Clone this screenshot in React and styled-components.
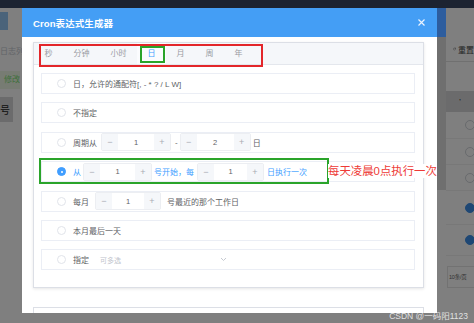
import React from 'react';
import styled, { createGlobalStyle, css } from 'styled-components';
import { RotateCw } from 'lucide-react';

const GlobalStyle = createGlobalStyle`
  html, body {
    margin: 0;
    padding: 0;
  }
  body {
    width: 474px;
    height: 323px;
    overflow: hidden;
    font-family: "Liberation Sans", "Noto Sans CJK SC", sans-serif;
  }
`;

const Screen = styled.div`
  position: relative;
  width: 474px;
  height: 323px;
  overflow: hidden;
  background: #ffffff;
  display: flex;
  flex-direction: column;
`;

const TopBar = styled.div`
  height: 8px;
  flex-shrink: 0;
  background: #384662;
`;

const PageBody = styled.div`
  flex: 1;
  display: flex;
  justify-content: space-between;
`;

const LeftPane = styled.div`
  width: 22px;
  display: flex;
  flex-direction: column;
  padding-top: 4px;
  font-size: 8px;
`;

const SideBtn = styled.div`
  width: 8px;
  height: 18px;
  background: #95c7f5;
`;

const SideLabel = styled.div`
  margin-top: 17px;
  color: #c4c8cf;
  line-height: 10px;
  white-space: nowrap;
`;

const GreenBtn = styled.div`
  margin-top: 14px;
  width: 16px;
  height: 18px;
  padding-left: 4px;
  background: #eef9e6;
  color: #7ee07a;
  line-height: 18px;
  overflow: hidden;
`;

const TableHead = styled.div`
  margin-top: ${(p) => p.top || 0}px;
  height: ${(p) => p.h || 22}px;
  width: ${(p) => p.w || '100%'};
  background: #d6d6d8;
  color: #222;
  display: flex;
  align-items: center;
  font-size: ${(p) => p.fs || 8}px;
  white-space: nowrap;
  overflow: hidden;
`;

const RightPane = styled.div`
  width: 28px;
  display: flex;
  flex-direction: column;
  font-size: 8px;
  overflow: hidden;
`;

const ResetBtn = styled.div`
  margin-top: 33px;
  padding-left: 7px;
  height: 16px;
  display: flex;
  align-items: center;
  gap: 2px;
  color: #4a4a4a;
  white-space: nowrap;
`;

const RuleLine = styled.div`
  margin-top: 4px;
  height: 1px;
  background: #e0e0e0;
`;

const SideRow = styled.div`
  height: ${(p) => p.h}px;
  display: flex;
  align-items: center;
  padding-left: 19px;
  border-bottom: 1px solid #f0f0f0;
`;

const SideRadio = styled.span`
  width: 10px;
  height: 10px;
  flex-shrink: 0;
  border-radius: 50%;
  box-sizing: border-box;
  border: 1px solid #d0d4da;
  background: #fff;
  ${({ on }) => on && css`
    border-color: #3d8fe8;
    background: #3d8fe8;
  `}
`;

const PagerBox = styled.div`
  margin-top: 10px;
  margin-left: 1px;
  height: 20px;
  border: 1px solid #e4e4e4;
  border-right: none;
  display: flex;
  align-items: center;
  padding-left: 1px;
  color: #666;
  font-size: 5.5px;
  letter-spacing: -0.2px;
  white-space: nowrap;
`;

const Overlay = styled.div`
  position: absolute;
  inset: 0;
  background: rgba(0, 0, 0, 0.5);
`;

const Dialog = styled.div`
  position: absolute;
  left: 22px;
  top: 8px;
  width: 424px;
  height: 305px;
  display: flex;
  align-items: flex-start;
`;

const DialogMain = styled.div`
  width: 415px;
  height: 100%;
  display: flex;
  flex-direction: column;
  background: #ffffff;
`;

const ScrollTrack = styled.div`
  width: 9px;
  display: flex;
  flex-direction: column;
`;

const ScrollHead = styled.div`
  height: 29px;
  background: #2d5d9e;
`;

const ScrollBody = styled.div`
  height: 153px;
  background: #6f6f6f;
`;

const Header = styled.div`
  height: 29px;
  flex-shrink: 0;
  background: #449ef5;
  display: flex;
  align-items: center;
  justify-content: space-between;
  padding: 0 12px 0 11px;
`;

const Title = styled.div`
  color: #ffffff;
  font-size: 9.5px;
  font-weight: bold;
  letter-spacing: 0.1px;
`;

const CloseBtn = styled.svg`
  width: 7px;
  height: 7px;
`;

const DialogBody = styled.div`
  flex: 1;
  display: flex;
  flex-direction: column;
  gap: 19px;
  padding: 5px 13px 0 11px;
  overflow: hidden;
`;

const TabsCard = styled.div`
  position: relative;
  height: 246px;
  flex-shrink: 0;
  box-sizing: border-box;
  border: 1px solid #dcdfe6;
  box-shadow: 0 1px 3px rgba(0, 0, 0, 0.1);
  display: flex;
  flex-direction: column;
`;

const TabNav = styled.div`
  height: 22px;
  box-sizing: border-box;
  background: #f5f7fa;
  border-bottom: 1px solid #e4e7ed;
  display: flex;
`;

const Tab = styled.div`
  padding: 0 10.5px;
  font-size: 8px;
  line-height: 21px;
  color: #9a9ca3;
  ${({ active }) => active && css`
    color: #409eff;
    background: #fbfcfe;
  `}
`;

const Pane = styled.div`
  display: flex;
  flex-direction: column;
  gap: 8.4px;
  padding: 8px 8px 0 7px;
`;

const Row = styled.div`
  height: 21px;
  box-sizing: border-box;
  border: 1px solid #ebeef5;
  display: flex;
  align-items: center;
  padding-left: 15px;
  font-size: 8px;
  color: ${({ active }) => (active ? '#409eff' : '#606266')};
  white-space: nowrap;
`;

const Radio = styled.span`
  position: relative;
  width: 9px;
  height: 9px;
  flex-shrink: 0;
  box-sizing: border-box;
  border-radius: 50%;
  border: 1px solid #e1e4ea;
  margin-right: 7px;
  ${({ checked }) => checked && css`
    border-color: #409eff;
    background: #409eff;
    &::after {
      content: '';
      position: absolute;
      left: 2.5px;
      top: 2.5px;
      width: 2px;
      height: 2px;
      border-radius: 50%;
      background: #fff;
    }
  `}
`;

const NumBox = styled.div`
  display: flex;
  width: ${({ w }) => w || 69}px;
  height: 18px;
  margin: 0 ${({ mx }) => (mx === undefined ? 3 : mx)}px;
  box-sizing: border-box;
  border: 1px solid #eceef2;
  border-radius: 2px;
  flex-shrink: 0;
`;

const NumBtn = styled.span`
  width: 16px;
  background: #f5f7fa;
  color: #a8abb2;
  display: flex;
  align-items: center;
  justify-content: center;
  font-size: 9px;
`;

const NumVal = styled.span`
  flex: 1;
  display: flex;
  align-items: center;
  justify-content: center;
  color: #606266;
  font-size: 7.5px;
`;

const Select = styled.div`
  width: 135px;
  height: 18px;
  margin-left: 10px;
  box-sizing: border-box;
  display: flex;
  align-items: center;
  justify-content: space-between;
  padding: 0 7px 0 1px;
  color: #c0c4cc;
  font-size: 7px;
`;

const Mark = styled.div`
  position: absolute;
  left: ${(p) => p.x}px;
  top: ${(p) => p.y}px;
  width: ${(p) => p.w}px;
  height: ${(p) => p.h}px;
  box-sizing: border-box;
  border: 2px solid ${(p) => p.color};
  pointer-events: none;
`;

const Note = styled.div`
  position: absolute;
  left: calc(100% + 1px);
  top: 50%;
  transform: translateY(-50%);
  background: #fff;
  color: #ee3a36;
  font-size: 11.4px;
  line-height: 14px;
  white-space: nowrap;
`;

const LowerCard = styled.div`
  flex: 1;
  border: 1px solid #dcdfe6;
  border-bottom: none;
`;

const Watermark = styled.div`
  position: absolute;
  right: 6px;
  bottom: 2px;
  color: rgba(255, 255, 255, 0.78);
  font-size: 8.5px;
  white-space: nowrap;
`;

const tabs = ['秒', '分钟', '小时', '日', '月', '周', '年'];

const InputNumber = ({ value, w, mx }) => (
  <NumBox w={w} mx={mx}>
    <NumBtn>−</NumBtn>
    <NumVal>{value}</NumVal>
    <NumBtn>+</NumBtn>
  </NumBox>
);

const Chevron = () => (
  <svg width="7" height="5" viewBox="0 0 7 5">
    <polyline points="1,1 3.5,3.5 6,1" fill="none" stroke="#c0c4cc" strokeWidth="0.9" />
  </svg>
);

const App = () => {
  return (
    <>
      <GlobalStyle />
      <Screen>
        <TopBar />
        <PageBody>
          <LeftPane>
            <SideBtn />
            <SideLabel>日志列</SideLabel>
            <GreenBtn>修改</GreenBtn>
            <TableHead top={8} h={25} w="13px" fs={10}>号</TableHead>
          </LeftPane>
          <RightPane>
            <ResetBtn>
              <RotateCw size={8} strokeWidth={2.4} />
              重置
            </ResetBtn>
            <RuleLine />
            <TableHead top={29} h={21}>&nbsp;&nbsp;&nbsp;&nbsp;&nbsp;&nbsp;'</TableHead>
            <SideRow h={26}><SideRadio /></SideRow>
            <SideRow h={25}><SideRadio /></SideRow>
            <SideRow h={25}><SideRadio /></SideRow>
            <SideRow h={33}><SideRadio on /></SideRow>
            <SideRow h={30}><SideRadio on /></SideRow>
            <PagerBox>10条/页</PagerBox>
          </RightPane>
        </PageBody>

        <Overlay />

        <Dialog>
          <DialogMain>
            <Header>
              <Title>Cron表达式生成器</Title>
              <CloseBtn viewBox="0 0 7 7">
                <path d="M0.5 0.5 L6.5 6.5 M6.5 0.5 L0.5 6.5" stroke="#eaf3ff" strokeWidth="1.2" />
              </CloseBtn>
            </Header>
            <DialogBody>
              <TabsCard>
                <TabNav>
                  {tabs.map((t) => (
                    <Tab key={t} active={t === '日'}>{t}</Tab>
                  ))}
                </TabNav>
                <Pane>
                  <Row>
                    <Radio />
                    日，允许的通配符[, - * ? / L W]
                  </Row>
                  <Row>
                    <Radio />
                    不指定
                  </Row>
                  <Row>
                    <Radio />
                    周期从
                    <InputNumber value="1" mx={4} w={70} />
                    -
                    <InputNumber value="2" mx={2} w={71} />
                    日
                  </Row>
                  <Row active>
                    <Radio checked />
                    从
                    <InputNumber value="1" mx={2} />
                    号开始，每
                    <InputNumber value="1" mx={3} w={67} />
                    日执行一次
                  </Row>
                  <Row>
                    <Radio />
                    每月
                    <InputNumber value="1" mx={6} w={66} />
                    号最近的那个工作日
                  </Row>
                  <Row>
                    <Radio />
                    本月最后一天
                  </Row>
                  <Row>
                    <Radio />
                    指定
                    <Select>
                      可多选
                      <Chevron />
                    </Select>
                  </Row>
                </Pane>

                <Mark x={5} y={1} w={224} h={23} color="#e3262a" />
                <Mark x={106} y={3} w={25} h={17} color="#2aa42a" />
                <Mark x={5} y={115} w={290} h={26} color="#2aa42a">
                  <Note>每天凌晨0点执行一次</Note>
                </Mark>
              </TabsCard>
              <LowerCard />
            </DialogBody>
          </DialogMain>
          <ScrollTrack>
            <ScrollHead />
            <ScrollBody />
          </ScrollTrack>
        </Dialog>

        <Watermark>CSDN @一码阳1123</Watermark>
      </Screen>
    </>
  );
};

export default App;
